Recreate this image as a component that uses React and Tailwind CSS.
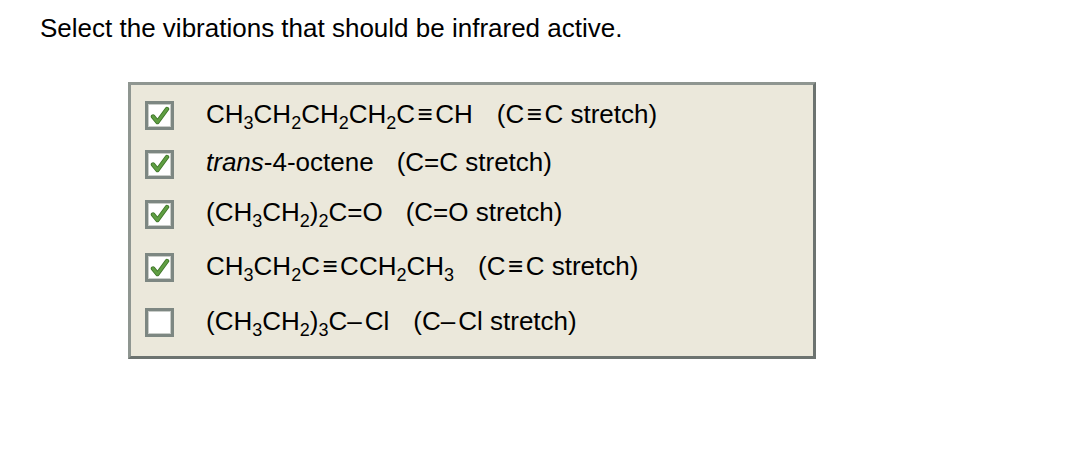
import React from 'react';

const Sub = ({ children }) => (
  <span className="text-[18px] leading-none relative top-[6px]">{children}</span>
);

// triple bond / single bond glyphs sit a little apart from their atoms
const Triple = () => <span className="mx-[2.5px]">≡</span>;
const Dash = () => <span className="mr-[3px]">–</span>;

const Check = () => (
  <svg width="20" height="20" viewBox="0 0 20 20">
    <path d="M3 10.5 L7.5 16 L17 3" fill="none" stroke="#3d7328" strokeWidth="4.4" strokeLinecap="round" strokeLinejoin="round" />
    <path d="M3 10.5 L7.5 16 L17 3" fill="none" stroke="#5f9e42" strokeWidth="2.8" strokeLinecap="round" strokeLinejoin="round" />
  </svg>
);

const Box = ({ checked }) => (
  <div className="w-[29px] h-[29px] shrink-0 border-[3px] border-[#7d8782] bg-white flex items-center justify-center shadow-[inset_0_0_0_1px_#c9cdc9]">
    {checked && <Check />}
  </div>
);

const rows = [
  {
    checked: true,
    h: 'h-[49px]',
    label: (
      <>
        CH<Sub>3</Sub>CH<Sub>2</Sub>CH<Sub>2</Sub>CH<Sub>2</Sub>C<Triple />CH<span className="ml-[24px]">(C<Triple />C stretch)</span>
      </>
    ),
  },
  {
    checked: true,
    h: 'h-[48px]',
    label: (
      <>
        <i>trans</i>-4-octene<span className="ml-[23px]">(C=C stretch)</span>
      </>
    ),
  },
  {
    checked: true,
    h: 'h-[52px]',
    label: (
      <>
        (CH<Sub>3</Sub>CH<Sub>2</Sub>)<Sub>2</Sub>C=O<span className="ml-[23px]">(C=O stretch)</span>
      </>
    ),
  },
  {
    checked: true,
    h: 'h-[55px]',
    label: (
      <>
        CH<Sub>3</Sub>CH<Sub>2</Sub>C<Triple />CCH<Sub>2</Sub>CH<Sub>3</Sub><span className="ml-[24px]">(C<Triple />C stretch)</span>
      </>
    ),
  },
  {
    checked: false,
    h: 'h-[55px]',
    label: (
      <>
        (CH<Sub>3</Sub>CH<Sub>2</Sub>)<Sub>3</Sub>C<Dash />Cl<span className="ml-[24px]">(C<Dash />Cl stretch)</span>
      </>
    ),
  },
];

export default function App() {
  return (
    <div className="w-[1072px] h-[456px] bg-white text-black font-['Liberation_Sans',Arial,sans-serif] pt-[13px] pl-[40px]">
      <p className="text-[26px] leading-[30px]">Select the vibrations that should be infrared active.</p>

      <div className="mt-[39px] ml-[88px] w-[688px] h-[277px] bg-[#ebe8db] border-[3px] border-t-[#8f9691] border-l-[#8f9691] border-r-[#6c7370] border-b-[#6c7370] pt-[6px] pl-[14px]">
        {rows.map((r, i) => (
          <div key={i} className={`flex items-center ${r.h}`}>
            <Box checked={r.checked} />
            <div className="ml-[32px] text-[26px] leading-none whitespace-nowrap relative -top-[2px]">{r.label}</div>
          </div>
        ))}
      </div>
    </div>
  );
}
